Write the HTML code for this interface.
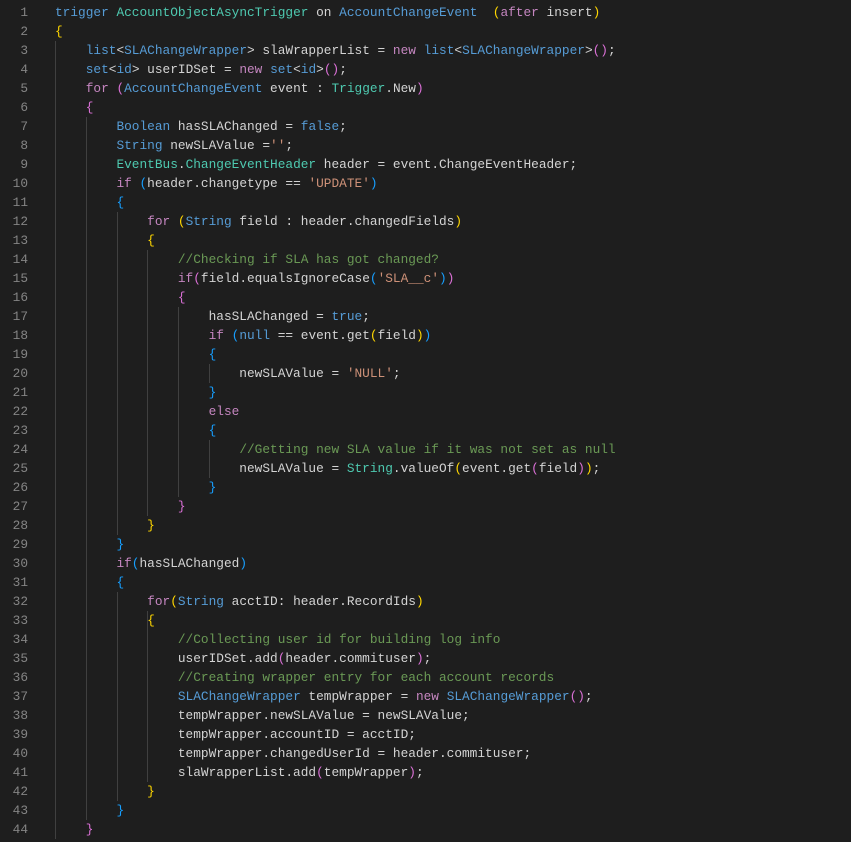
<!DOCTYPE html>
<html><head><meta charset="utf-8"><style>
body{margin:0;background:#1e1e1e;width:851px;height:842px;overflow:hidden;position:relative}
.ln{position:absolute;left:0;width:28px;text-align:right;top:3px;font:12.8px/19px "Liberation Mono",monospace;color:#858585;white-space:pre}
.code{position:absolute;left:55px;top:3px;font:12.8px/19px "Liberation Mono",monospace;color:#d4d4d4;white-space:pre;margin:0}
.g{position:absolute;width:1px;background:#404040}
.k{color:#c586c0}.b{color:#569cd6}.t{color:#4ec9b0}.s{color:#ce9178}.c{color:#6a9955}
.y{color:#ffd700}.p{color:#da70d6}.u{color:#179fff}.v{color:#dcdcdc}
</style></head><body>
<div class="ln">1
2
3
4
5
6
7
8
9
10
11
12
13
14
15
16
17
18
19
20
21
22
23
24
25
26
27
28
29
30
31
32
33
34
35
36
37
38
39
40
41
42
43
44</div>
<div class="g" style="left:55px;top:41px;height:798px"></div>
<div class="g" style="left:86px;top:117px;height:703px"></div>
<div class="g" style="left:117px;top:212px;height:323px"></div>
<div class="g" style="left:117px;top:592px;height:209px"></div>
<div class="g" style="left:147px;top:250px;height:266px"></div>
<div class="g" style="left:147px;top:611px;height:171px"></div>
<div class="g" style="left:178px;top:307px;height:190px"></div>
<div class="g" style="left:209px;top:364px;height:19px"></div>
<div class="g" style="left:209px;top:440px;height:38px"></div>
<pre class="code"><span class="b">trigger</span> <span class="t">AccountObjectAsyncTrigger</span> on <span class="b">AccountChangeEvent</span>  <span class="y">(</span><span class="k">after</span> insert<span class="y">)</span>
<span class="y">{</span>
    <span class="b">list</span>&lt;<span class="b">SLAChangeWrapper</span>&gt; slaWrapperList = <span class="k">new</span> <span class="b">list</span>&lt;<span class="b">SLAChangeWrapper</span>&gt;<span class="p">()</span>;
    <span class="b">set</span>&lt;<span class="b">id</span>&gt; userIDSet = <span class="k">new</span> <span class="b">set</span>&lt;<span class="b">id</span>&gt;<span class="p">()</span>;
    <span class="k">for</span> <span class="p">(</span><span class="b">AccountChangeEvent</span> event : <span class="t">Trigger</span>.New<span class="p">)</span>
    <span class="p">{</span>
        <span class="b">Boolean</span> hasSLAChanged = <span class="b">false</span>;
        <span class="b">String</span> newSLAValue =<span class="s">''</span>;
        <span class="t">EventBus</span>.<span class="t">ChangeEventHeader</span> header = event.ChangeEventHeader;
        <span class="k">if</span> <span class="u">(</span>header.changetype == <span class="s">'UPDATE'</span><span class="u">)</span>
        <span class="u">{</span>
            <span class="k">for</span> <span class="y">(</span><span class="b">String</span> field : header.changedFields<span class="y">)</span>
            <span class="y">{</span>
                <span class="c">//Checking if SLA has got changed?</span>
                <span class="k">if</span><span class="p">(</span>field.equalsIgnoreCase<span class="u">(</span><span class="s">'SLA__c'</span><span class="u">)</span><span class="p">)</span>
                <span class="p">{</span>
                    hasSLAChanged = <span class="b">true</span>;
                    <span class="k">if</span> <span class="u">(</span><span class="b">null</span> == event.get<span class="y">(</span>field<span class="y">)</span><span class="u">)</span>
                    <span class="u">{</span>
                        newSLAValue = <span class="s">'NULL'</span>;
                    <span class="u">}</span>
                    <span class="k">else</span>
                    <span class="u">{</span>
                        <span class="c">//Getting new SLA value if it was not set as null</span>
                        newSLAValue = <span class="t">String</span>.valueOf<span class="y">(</span>event.get<span class="p">(</span>field<span class="p">)</span><span class="y">)</span>;
                    <span class="u">}</span>
                <span class="p">}</span>
            <span class="y">}</span>
        <span class="u">}</span>
        <span class="k">if</span><span class="u">(</span>hasSLAChanged<span class="u">)</span>
        <span class="u">{</span>
            <span class="k">for</span><span class="y">(</span><span class="b">String</span> acctID: header.RecordIds<span class="y">)</span>
            <span class="y">{</span>
                <span class="c">//Collecting user id for building log info</span>
                userIDSet.add<span class="p">(</span>header.commituser<span class="p">)</span>;
                <span class="c">//Creating wrapper entry for each account records</span>
                <span class="b">SLAChangeWrapper</span> tempWrapper = <span class="k">new</span> <span class="b">SLAChangeWrapper</span><span class="p">()</span>;
                tempWrapper.newSLAValue = newSLAValue;
                tempWrapper.accountID = acctID;
                tempWrapper.changedUserId = header.commituser;
                slaWrapperList.add<span class="p">(</span>tempWrapper<span class="p">)</span>;
            <span class="y">}</span>
        <span class="u">}</span>
    <span class="p">}</span></pre>
</body></html>
